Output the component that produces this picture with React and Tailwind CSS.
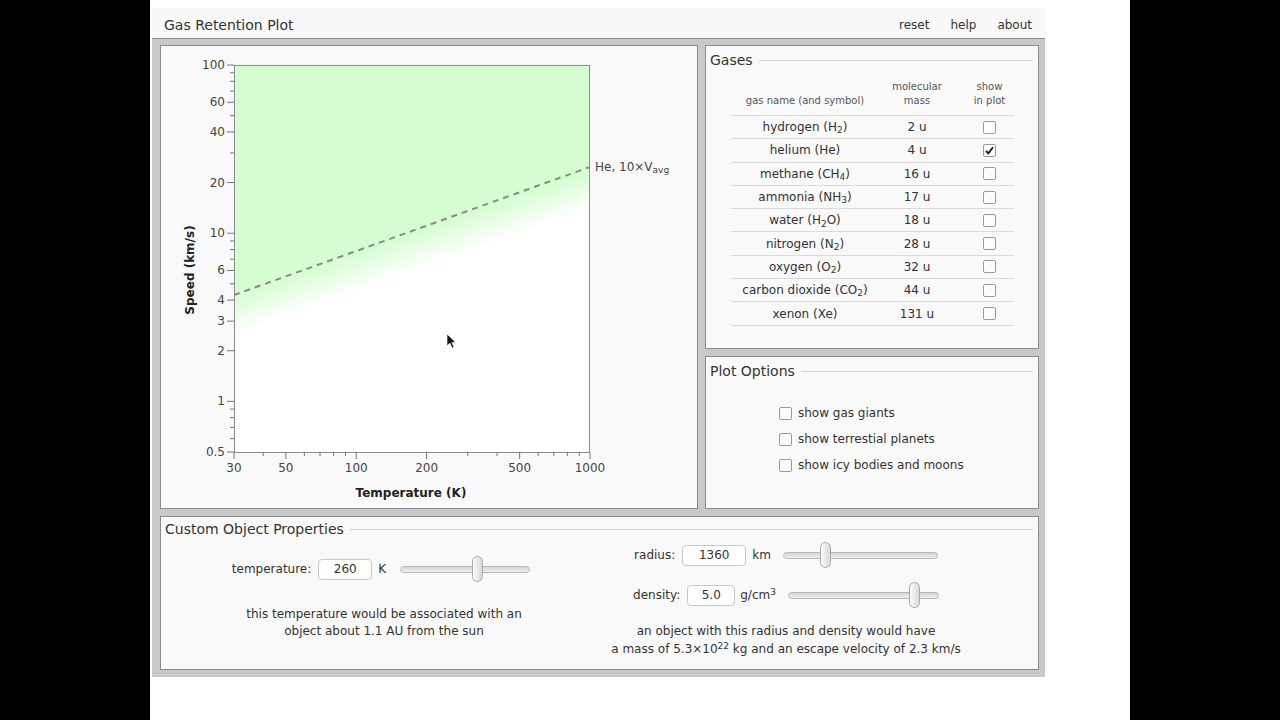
import React from "react";

const X0 = 73, X1 = 429, Y0 = 19, Y1 = 406;
const lx = (T) => X0 + ((Math.log10(T) - Math.log10(30)) * (X1 - X0)) / Math.log10(1000 / 30);
const ly = (v) => Y0 + ((2 - Math.log10(v)) * (Y1 - Y0)) / Math.log10(200);

const yMajor = [100, 60, 40, 20, 10, 6, 4, 3, 2, 1, 0.5];
const yMinor = [90, 80, 70, 50, 30, 9, 8, 7, 5, 0.9, 0.8, 0.7, 0.6];
const xMajor = [30, 50, 100, 200, 500, 1000];
const xMinor = [40, 60, 70, 80, 90, 300, 400, 600, 700, 800, 900];

function Plot() {
  const vL = 4.29;
  const vR = vL * Math.sqrt(1000 / 30);
  const yL = ly(vL), yR = ly(vR);
  return (
    <svg width="536" height="462" className="block">
      <defs>
        <linearGradient id="gz" gradientUnits="userSpaceOnUse" x1="252" y1="187" x2="264" y2="221">
          <stop offset="0" stopColor="#d6fdd1" />
          <stop offset="1" stopColor="#ffffff" />
        </linearGradient>
      </defs>
      <rect x={X0} y={Y0} width={X1 - X0} height={Y1 - Y0} fill="url(#gz)" />
      <line x1={X0} y1={yL} x2={X1} y2={yR} stroke="#8a8a8a" strokeWidth="2" strokeDasharray="6 5" />
      <rect x={X0 + 0.5} y={Y0 + 0.5} width={X1 - X0 - 1} height={Y1 - Y0} fill="none" stroke="#8c8c8c" strokeWidth="1" />
      {yMajor.map((v) => (
        <g key={"ym" + v}>
          <line x1={66} x2={X0} y1={ly(v)} y2={ly(v)} stroke="#777" strokeWidth="1" />
          <text x={64} y={ly(v) + 4} textAnchor="end" fontSize="12" fill="#444" fontFamily="DejaVu Sans">{v}</text>
        </g>
      ))}
      {yMinor.map((v) => (
        <line key={"yn" + v} x1={69} x2={X0} y1={ly(v)} y2={ly(v)} stroke="#777" strokeWidth="1" />
      ))}
      {xMajor.map((t) => (
        <g key={"xm" + t}>
          <line x1={lx(t)} x2={lx(t)} y1={Y1} y2={Y1 + 7} stroke="#777" strokeWidth="1" />
          <text x={lx(t)} y={Y1 + 20} textAnchor="middle" fontSize="12" fill="#444" fontFamily="DejaVu Sans">{t}</text>
        </g>
      ))}
      {xMinor.map((t) => (
        <line key={"xn" + t} x1={lx(t)} x2={lx(t)} y1={Y1} y2={Y1 + 4} stroke="#777" strokeWidth="1" />
      ))}
      <text x={434} y={125} fontSize="12" fill="#444" fontFamily="DejaVu Sans">
        He, 10×V<tspan fontSize="9" dy="2">avg</tspan>
      </text>
      <text x={0} y={0} transform="translate(33 224) rotate(-90)" textAnchor="middle" fontSize="12" fontWeight="bold" fill="#222" fontFamily="DejaVu Sans">
        Speed (km/s)
      </text>
      <text x={250} y={451} textAnchor="middle" fontSize="12" fontWeight="bold" fill="#222" fontFamily="DejaVu Sans">
        Temperature (K)
      </text>
      <g transform="translate(286 288) scale(0.85)">
        <path d="M0 0 L0 14 L3.5 10.8 L6 16.5 L8.3 15.5 L5.8 9.9 L10.3 9.9 Z" fill="#111" stroke="#fff" strokeWidth="0.8" />
      </g>
    </svg>
  );
}

function Panel({ className, children }) {
  return <div className={"border border-[#8a8a8a] bg-[#f9f9f9] " + className}>{children}</div>;
}

function Title({ children }) {
  return (
    <div className="h-[18px] flex items-center gap-[6px] pl-[4px] pr-[5px]">
      <span className="text-[14px] text-[#333] leading-[18px] whitespace-nowrap">{children}</span>
      <div className="flex-1 h-px bg-[#d4d4d4]" />
    </div>
  );
}

function Check({ checked }) {
  return (
    <span className="w-[13px] h-[13px] border border-[#9a9a9a] bg-[#fdfdfd] rounded-[2px] flex items-center justify-center shrink-0">
      {checked ? (
        <svg width="9" height="9" viewBox="0 0 9 9">
          <path d="M1 4.8 L3.3 7.3 L8 1.3" fill="none" stroke="#111" strokeWidth="1.8" />
        </svg>
      ) : null}
    </span>
  );
}

function Slider({ track, thumb }) {
  return (
    <div className={"relative h-[26px] flex items-center " + track}>
      <div className="w-full h-[7px] rounded-full border border-[#b8b8b8] bg-linear-to-b from-[#d6d6d6] to-[#eeeeee]" />
      <div className={"absolute top-0 h-[26px] w-[11px] rounded-full border border-[#a9a9a9] bg-linear-to-r from-[#fbfbfb] to-[#d9d9d9] " + thumb} />
    </div>
  );
}

function Box({ w, children }) {
  return (
    <div className={"h-[21px] bg-white border border-[#c9c9c9] rounded-[4px] flex items-center justify-center text-[12px] text-[#333] " + w}>
      {children}
    </div>
  );
}

const sub = (t) => <sub className="text-[9px]">{t}</sub>;

const gases = [
  [<>hydrogen (H{sub("2")})</>, "2 u", false],
  [<>helium (He)</>, "4 u", true],
  [<>methane (CH{sub("4")})</>, "16 u", false],
  [<>ammonia (NH{sub("3")})</>, "17 u", false],
  [<>water (H{sub("2")}O)</>, "18 u", false],
  [<>nitrogen (N{sub("2")})</>, "28 u", false],
  [<>oxygen (O{sub("2")})</>, "32 u", false],
  [<>carbon dioxide (CO{sub("2")})</>, "44 u", false],
  [<>xenon (Xe)</>, "131 u", false],
];

export default function App() {
  return (
    <div className="w-[1280px] h-[720px] bg-black flex font-['DejaVu_Sans',sans-serif] text-[#333]">
      <div className="w-[150px] shrink-0" />
      <div className="w-[980px] h-full bg-white pl-[2px] pt-[8px] shrink-0">
        <div className="w-[893px]">
          <header className="h-[30px] bg-[#f8f8f8] flex items-center justify-between pl-[12px] pr-[13px] pt-[4px]">
            <span className="text-[14px] text-[#333]">Gas Retention Plot</span>
            <nav className="flex gap-[21px] text-[12px] text-[#333]">
              <span>reset</span>
              <span>help</span>
              <span>about</span>
            </nav>
          </header>
          <div className="border-t border-[#8a8a8a] bg-[#c9c9c9] pl-[8px] pr-[6px] pt-[6px] pb-[7px] flex flex-col gap-[7px]">
            <div className="flex gap-[7px] h-[464px]">
              <Panel className="w-[538px] h-full">
                <Plot />
              </Panel>
              <div className="w-[334px] flex flex-col gap-[7px]">
                <Panel className="h-[304px] pt-[5px]">
                  <Title>Gases</Title>
                  <div className="ml-[25px] w-[283px] mt-[11px]">
                    <div className="grid grid-cols-[148px_76px_59px] items-end text-[10px] leading-[14px] text-[#555] pb-[7px] border-b border-[#dadada] text-center">
                      <span>gas name (and symbol)</span>
                      <span>molecular<br />mass</span>
                      <span className="pl-[10px]">show<br />in plot</span>
                    </div>
                    {gases.map(([name, mass, c], i) => (
                      <div key={i} className="grid grid-cols-[148px_76px_59px] items-center h-[23.3px] border-b border-[#dadada] text-[12px] text-[#333] text-center">
                        <span>{name}</span>
                        <span>{mass}</span>
                        <span className="pl-[10px] flex justify-center">
                          <Check checked={c} />
                        </span>
                      </div>
                    ))}
                  </div>
                </Panel>
                <Panel className="flex-1 pt-[5px]">
                  <Title>Plot Options</Title>
                  <div className="mt-[20px] pl-[73px] flex flex-col text-[12px] text-[#333]">
                    {["show gas giants", "show terrestial planets", "show icy bodies and moons"].map((t) => (
                      <div key={t} className="h-[26px] flex items-center gap-[6px]">
                        <Check />
                        <span>{t}</span>
                      </div>
                    ))}
                  </div>
                </Panel>
              </div>
            </div>
            <Panel className="h-[154px] pt-[3px]">
              <Title>Custom Object Properties</Title>
              <div className="flex text-[12px] text-[#333]">
                <div className="w-[440px] flex flex-col items-center pt-[18px]">
                  <div className="flex items-center h-[26px]">
                    <span>temperature:</span>
                    <div className="ml-[7px]"><Box w="w-[54px]">260</Box></div>
                    <span className="ml-[6px]">K</span>
                    <div className="ml-[14px]"><Slider track="w-[130px]" thumb="left-[72px]" /></div>
                  </div>
                  <div className="mt-[24px] leading-[17px] text-center pl-[6px]">
                    this temperature would be associated with an
                    <br />
                    object about 1.1 AU from the sun
                  </div>
                </div>
                <div className="w-[370px] flex flex-col items-center pt-[4px]">
                  <div className="flex items-center h-[26px]">
                    <span>radius:</span>
                    <div className="ml-[7px]"><Box w="w-[64px]">1360</Box></div>
                    <span className="ml-[6px]">km</span>
                    <div className="ml-[12px]"><Slider track="w-[155px]" thumb="left-[37px]" /></div>
                  </div>
                  <div className="flex items-center h-[26px] mt-[14px]">
                    <span>density:</span>
                    <div className="ml-[7px]"><Box w="w-[48px]">5.0</Box></div>
                    <span className="ml-[5px]">g/cm<sup className="text-[9px]">3</sup></span>
                    <div className="ml-[12px]"><Slider track="w-[151px]" thumb="left-[121px]" /></div>
                  </div>
                  <div className="mt-[14px] leading-[18px] text-center whitespace-nowrap">
                    an object with this radius and density would have
                    <br />
                    a mass of 5.3×10<sup className="text-[9px]">22</sup> kg and an escape velocity of 2.3 km/s
                  </div>
                </div>
              </div>
            </Panel>
          </div>
        </div>
      </div>
      <div className="w-[150px] shrink-0" />
    </div>
  );
}
